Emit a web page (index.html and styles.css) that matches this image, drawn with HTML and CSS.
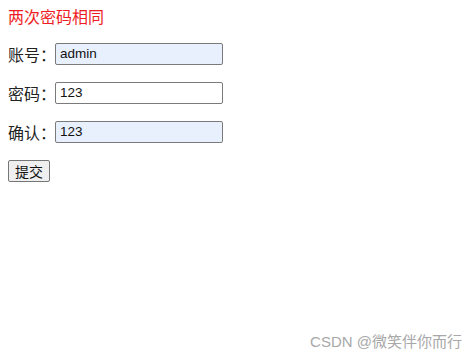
FILE: index.html
```html
<!DOCTYPE html>
<html>
<head>
<meta charset="utf-8">
<link rel="stylesheet" href="styles.css">
</head>
<body>
<div class="page">
  <div class="msg">两次密码相同</div>
  <form class="form">
    <div class="row"><label>账号：</label><input class="field autofill" type="text" value="admin"></div>
    <div class="row"><label>密码：</label><input class="field" type="text" value="123"></div>
    <div class="row"><label>确认：</label><input class="field autofill" type="text" value="123"></div>
    <div class="row"><button type="button" class="btn">提交</button></div>
  </form>
  <div class="mark">CSDN @微笑伴你而行</div>
</div>
</body>
</html>
```
FILE: styles.css
```css
html, body { margin: 0; padding: 0; background: #fff; }
body { font-family: "Liberation Sans", "Noto Sans CJK SC", sans-serif; font-size: 16px; color: #222; }
.page { position: relative; width: 474px; height: 358px; padding: 8px 8px 0 8px; box-sizing: border-box; }
.msg { color: #ee1c25; height: 20px; line-height: 20px; margin-top: 0; }
.form { display: flex; flex-direction: column; gap: 16px; margin-top: 14px; }
.row { display: flex; align-items: center; height: 23px; }
.row label { width: 47px; flex-shrink: 0; white-space: nowrap; }
.field { width: 168px; height: 22px; box-sizing: border-box; border: 1px solid #7a7a7a; border-radius: 2px; padding: 1px 4px; font-family: "Liberation Sans", sans-serif; font-size: 13.5px; color: #111; background: #fff; margin: 0; flex-shrink: 0; }
.field.autofill { background: #e8f0fe; }
.btn { height: 22px; width: 42px; padding: 0; font-family: "Liberation Sans", "Noto Sans CJK SC", sans-serif; font-size: 14px; background: #efefef; border: 1px solid #767676; border-radius: 2px; color: #111; }
.mark { position: absolute; right: 12px; bottom: 7px; color: #a8a8a8; font-size: 15px; }
```
